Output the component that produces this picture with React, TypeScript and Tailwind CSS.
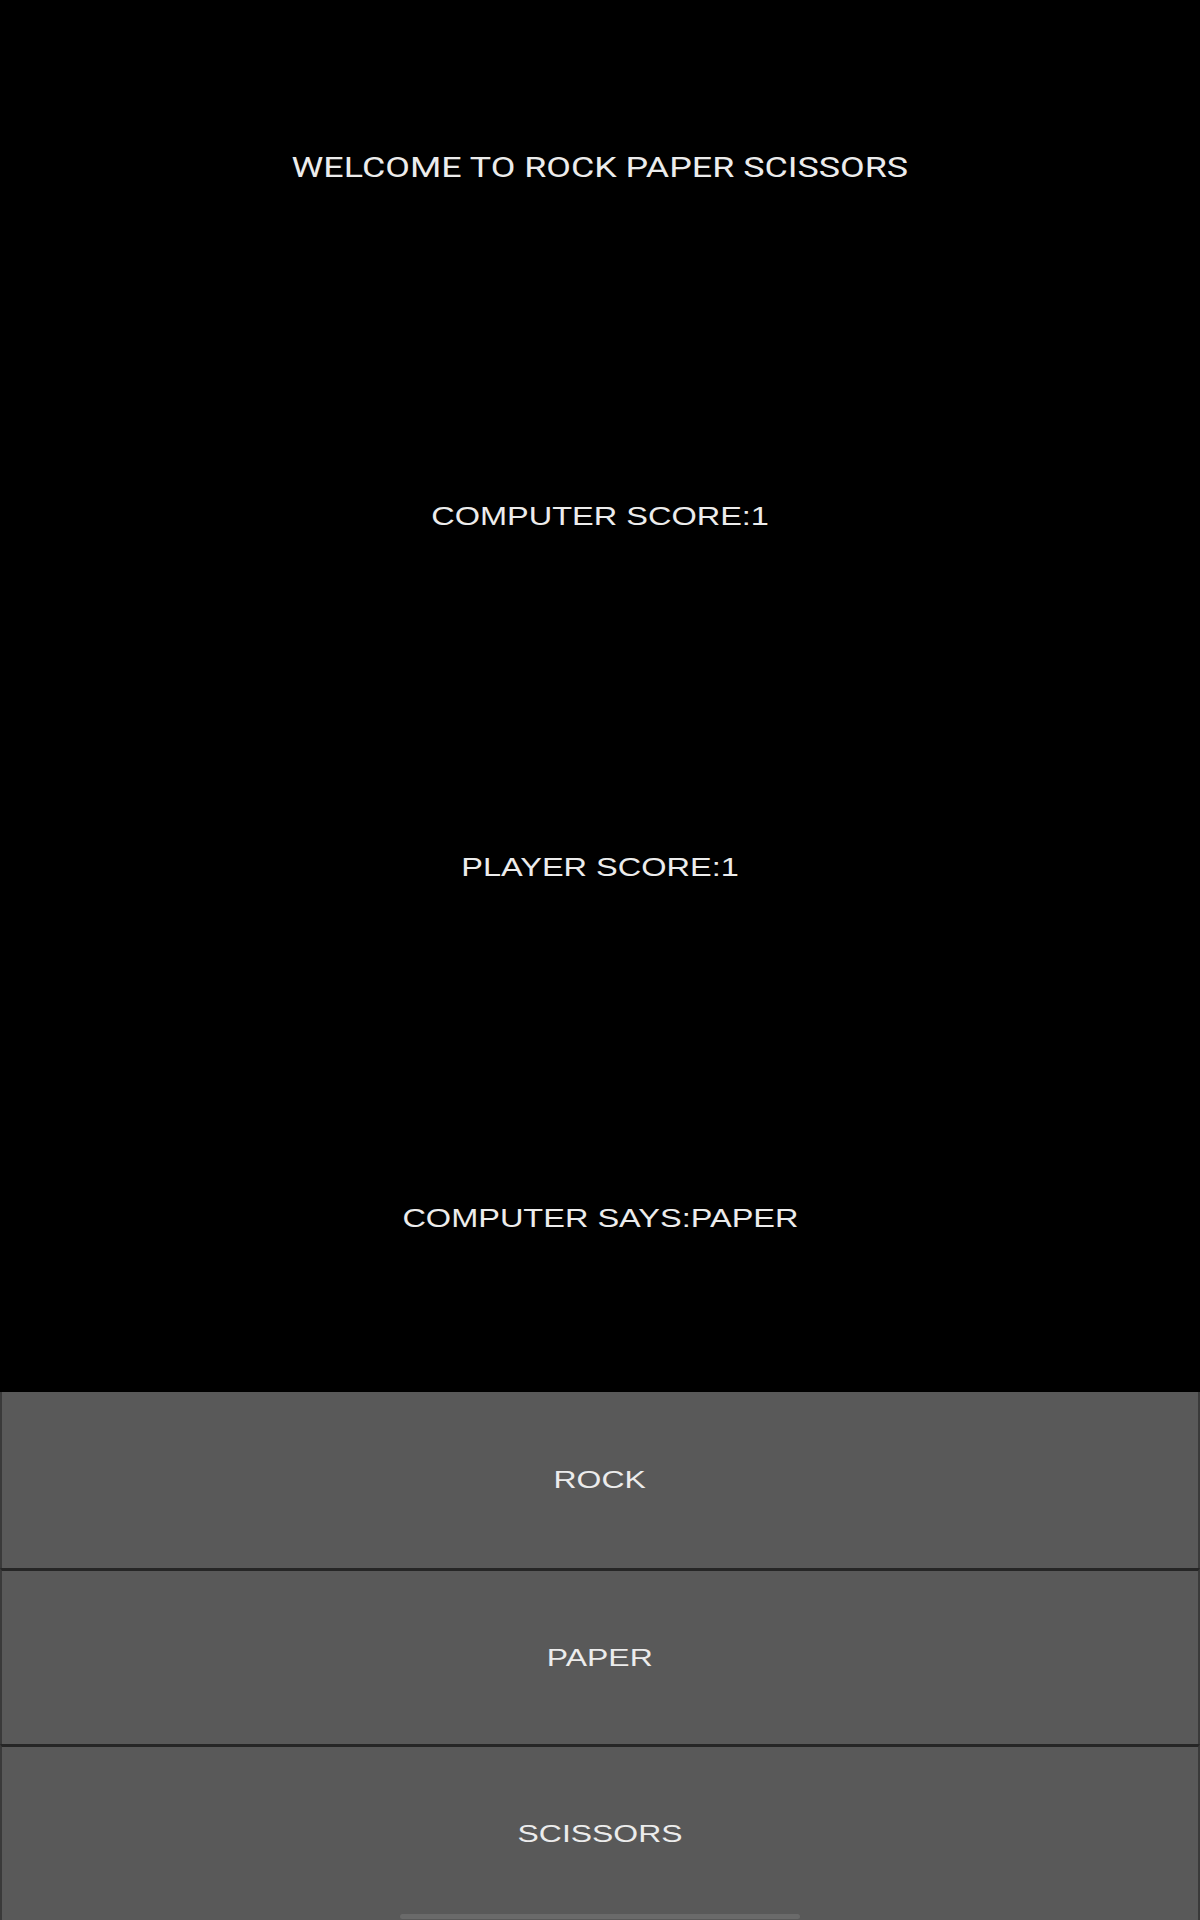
const lines = ["COMPUTER SCORE:1", "PLAYER SCORE:1", "COMPUTER SAYS:PAPER"]
const choices = ["ROCK", "PAPER", "SCISSORS"]

export default function App() {
  return (
    <div className="relative w-[1200px] h-[1920px] bg-black overflow-hidden">
      <div className="h-[1392px] flex flex-col items-center pt-[148px] gap-[317px]">
        <div className="h-[34px] flex items-center translate-y-[3px]">
          <span className="inline-block scale-x-[1.28] text-[28px] leading-[34px] text-[#ececec] font-['Roboto',sans-serif]">
            WELCOME TO ROCK PAPER SCISSORS
          </span>
        </div>
        {lines.map((t) => (
          <div key={t} className="h-[34px] flex items-center">
            <span className="inline-block scale-x-[1.25] text-[26px] leading-[34px] text-[#ececec] font-['Liberation_Sans',Arial,sans-serif]">
              {t}
            </span>
          </div>
        ))}
      </div>
      <div className="flex flex-col">
        {choices.map((c, i) => (
          <button
            key={c}
            className={
              i === 0
                ? "h-[176px] w-full flex items-center justify-center bg-[#595959] border-x-2 border-[#3a3a3a]"
                : "h-[176px] w-full flex items-center justify-center bg-[#595959] border-x-2 border-t-[3px] border-x-[#3a3a3a] border-t-[#262626]"
            }
          >
            <span className="inline-block scale-x-[1.33] text-[24px] leading-[30px] text-[#ececec] font-['Liberation_Sans',Arial,sans-serif]">
              {c}
            </span>
          </button>
        ))}
      </div>
      <div className="absolute bottom-[1px] left-[400px] w-[400px] h-[5px] rounded-full bg-[#6a6a6a]" />
    </div>
  )
}
